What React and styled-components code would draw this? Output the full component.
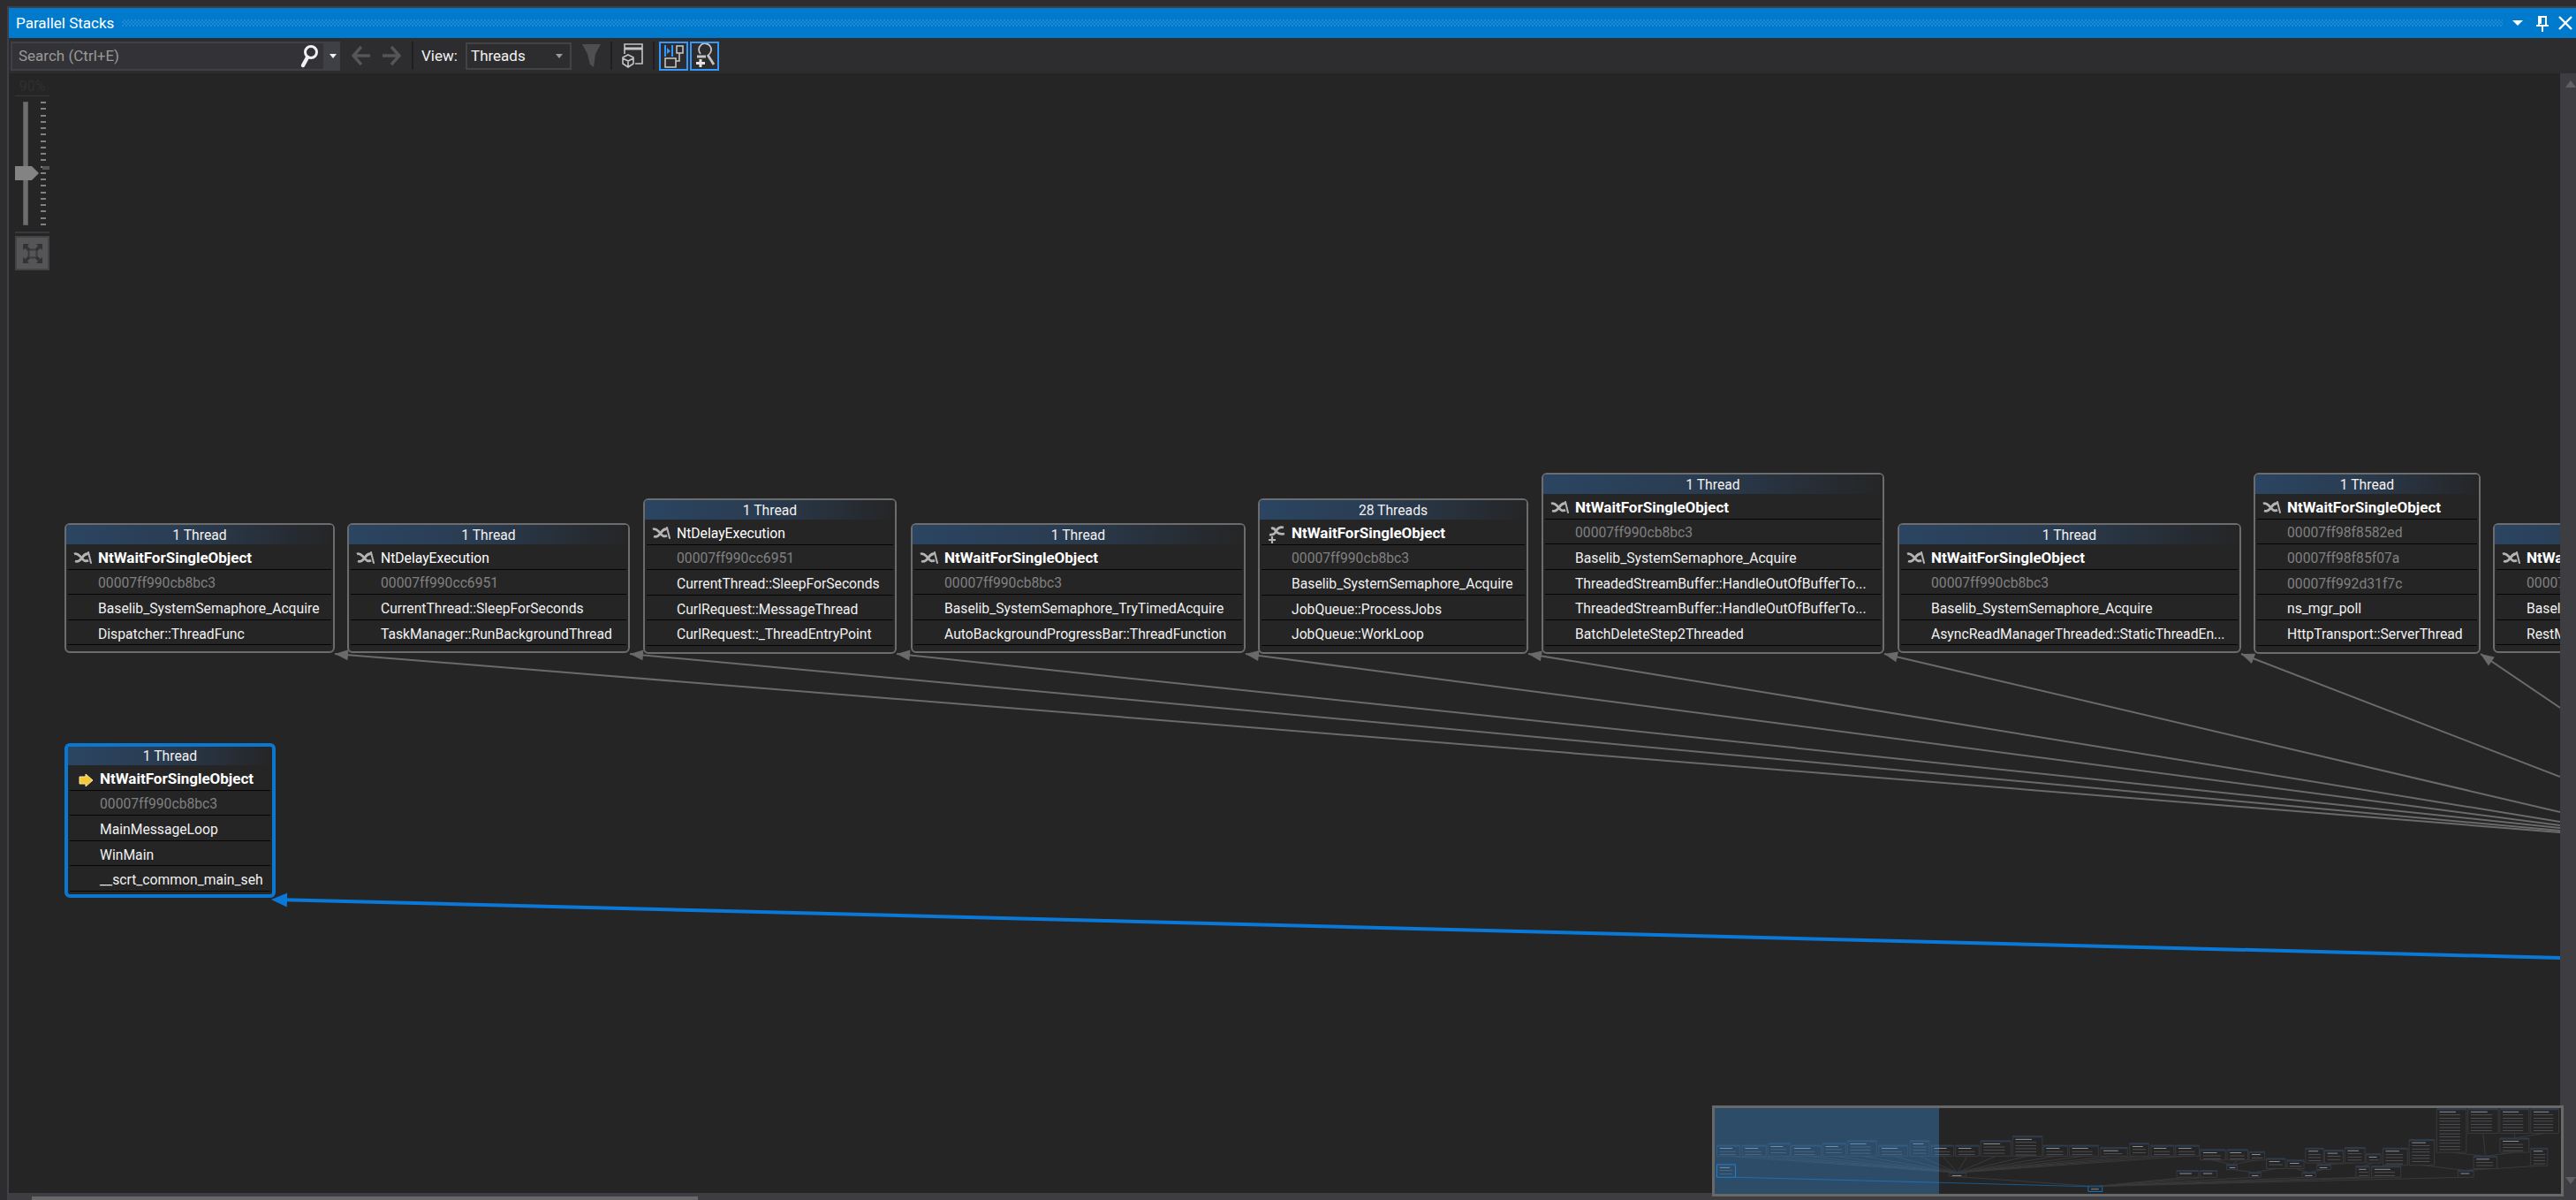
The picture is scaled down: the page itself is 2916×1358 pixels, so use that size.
import React from 'react';
import styled, { createGlobalStyle } from 'styled-components';

const GlobalStyle = createGlobalStyle`
html, body {
    margin: 0;
    padding: 0;
    background: #2d2d30;
}
* {
    box-sizing: border-box;
}
`
const FONT = `Roboto, "Noto Sans", sans-serif`;

const Window = styled.div`
position: relative;
width: 2916px;
height: 1358px;
display: flex;
overflow: hidden;
background: #2d2d30;
font-family: ${FONT};
padding-top: 7px;
`
const Gutter = styled.div`
width: 8px;
flex: none;
`
const Panel = styled.div`
flex: 1;
min-width: 0;
display: flex;
flex-direction: column;
border-left: 2px solid #3f3f46;
border-top: 2px solid #3f3f46;
`
const TitleBar = styled.div`
height: 34px;
flex: none;
display: flex;
align-items: center;
background: #007acc;
color: #fff;
font-size: 17px;
padding-left: 8px;
`
const TitleText = styled.div`
width: 120px;
flex: none;
`
const Grip = styled.div`
flex: 1;
height: 8px;
margin-right: 3px;
background: repeating-conic-gradient(#1f8ad3 0 25%, #007acc 0 50%) 0 0 / 4px 4px;
`
const TitleIcon = styled.svg`
width: ${p => p.$w || 28}px;
height: 24px;
flex: none;
`
const Toolbar = styled.div`
height: 40px;
flex: none;
display: flex;
align-items: center;
background: #2d2d30;
padding-left: 2px;
color: #f1f1f1;
font-size: 17px;
`
const SearchBox = styled.div`
width: 356px;
height: 33px;
display: flex;
align-items: center;
justify-content: space-between;
padding: 0 5px 0 7px;
background: #333337;
border: 2px solid #3f3f46;
color: #999;
`
const SearchDrop = styled.div`
width: 17px;
height: 33px;
display: flex;
align-items: center;
justify-content: center;
background: #3f3f46;
margin-right: 7px;
`
const Caret = styled.div`
width: 0;
height: 0;
border-left: 4px solid transparent;
border-right: 4px solid transparent;
border-top: 5px solid ${p => p.$color};
`
const ToolSlot = styled.div`
width: ${p => p.$w}px;
height: 33px;
flex: none;
display: flex;
align-items: center;
justify-content: center;
`
const Sep = styled.div`
width: 2px;
height: 32px;
flex: none;
background: #1f1f20;
margin-left: ${p => p.$ml || 0}px;
`
const ViewLabel = styled.div`
width: 50px;
margin-left: 9px;
`
const Combo = styled.div`
width: 120px;
height: 31px;
display: flex;
align-items: center;
justify-content: space-between;
padding: 0 8px 0 4px;
background: #2d2d30;
border: 2px solid #434346;
`
const Toggle = styled.div`
width: 33px;
height: 33px;
flex: none;
display: flex;
align-items: center;
justify-content: center;
border: 2px solid #3399ff;
margin-left: ${p => p.$ml}px;
`
const Body = styled.div`
flex: 1;
min-height: 0;
display: flex;
`
const Canvas = styled.div`
position: relative;
flex: 1;
overflow: hidden;
background: #252526;
`
const VScroll = styled.div`
width: 18px;
flex: none;
display: flex;
flex-direction: column;
justify-content: space-between;
align-items: flex-end;
padding: 8px 0 10px;
background: #3e3e42;
`
const ScrollArrow = styled.div`
width: 0;
height: 0;
border-left: 6px solid transparent;
border-right: 6px solid transparent;
${p => p.$up ? 'border-bottom' : 'border-top'}: 8px solid #606064;
`
const HScroll = styled.div`
height: 8px;
flex: none;
background: #3e3e42;
padding: 4px 0 0 26px;
`
const HThumb = styled.div`
width: 754px;
height: 4px;
background: #686868;
`
const Wires = styled.svg`
position: absolute;
left: 0;
top: 0;
`
const Node = styled.div`
position: absolute;
left: ${p => p.$x - 10}px;
top: ${p => p.$y - 83}px;
width: ${p => p.$w}px;
background: #252526;
border: ${p => p.$active ? '4px solid #0a78d0' : '2px solid #6c6c6c'};
border-radius: 6px;
padding-bottom: ${p => p.$active ? 3 : 7}px;
color: #f1f1f1;
font-size: 15.7px;
`
const NodeHead = styled.div`
height: ${p => p.$active ? 21 : 22}px;
display: flex;
align-items: center;
justify-content: center;
border-radius: 3px 3px 0 0;
background: linear-gradient(90deg, #2b4562 0%, #2a3c51 45%, #252526 100%);
`
const Frame = styled.div`
height: 28.6px;
display: flex;
align-items: center;
margin: 0 2px;
padding-top: 3px;
border-bottom: 1px solid #050505;
white-space: nowrap;
color: ${p => p.$addr ? '#808080' : p.$top ? '#ffffff' : '#f1f1f1'};
font-weight: ${p => p.$top && p.$bold ? 700 : 400};
font-size: ${p => p.$top && p.$bold ? 17 : 15.7}px;
`
const FrameIcon = styled.div`
width: 34px;
height: 100%;
flex: none;
padding: 5px 0 0 6px;
svg {
    display: block;
}
`
const ZoomRail = styled.div`
position: absolute;
left: 7px;
top: 0;
width: 39px;
display: flex;
flex-direction: column;
`
const ZoomPercent = styled.div`
height: 26px;
text-align: center;
color: #303032;
font-size: 16px;
line-height: 30px;
border-bottom: 1px solid #38383a;
`
const SliderBox = styled.div`
position: relative;
height: 155px;
border-bottom: 2px solid #38383a;
`
const Track = styled.div`
position: absolute;
left: 9px;
top: 6px;
width: 6px;
height: 140px;
background: #6e6e6e;
border: 1px solid #5a5a5a;
`
const Ticks = styled.div`
position: absolute;
left: 29px;
top: 6px;
height: 140px;
display: flex;
flex-direction: column;
justify-content: space-between;
`
const Tick = styled.div`
width: 6px;
height: 2px;
background: #808080;
`
const TickMark = styled.div`
position: absolute;
left: 31px;
top: 79px;
width: 8px;
height: 4px;
background: #555;
`
const Thumb = styled.div`
position: absolute;
left: 0;
top: 79px;
width: 27px;
height: 16px;
background: #838383;
clip-path: polygon(0 0, 70% 0, 100% 50%, 70% 100%, 0 100%);
`
const FitButton = styled.div`
width: 39px;
height: 39px;
margin-top: 3px;
display: flex;
align-items: center;
justify-content: center;
background: #555557;
border: 2px solid #434345;
`
const Minimap = styled.div`
position: absolute;
left: 1938px;
top: 1251px;
width: 964px;
height: 103px;
background: #252526;
border: 3px solid #686868;
`
const MiniView = styled.div`
position: absolute;
left: 0;
top: 0;
width: 254px;
height: 100%;
background: rgba(60, 150, 230, 0.35);
`
const MiniSvg = styled.svg`
position: absolute;
left: 0;
top: 0;
width: 100%;
height: 100%;
`

const THREAD_ICON = (
    <svg width="21" height="15" viewBox="0 0 21 15" fill="none" stroke="#b4b4b4" strokeWidth="2.8">
        <path d="M1 3 C5 1 7 5 9 7 C11 10 14 12 17 10" />
        <path d="M2 11 C5 12 8 10 10 7 C12 4 14 2 17 3" />
        <path d="M17 1 L20 13" strokeWidth="2" strokeLinecap="round" />
    </svg>
);

const MANY_ICON = (
    <svg width="21" height="20" viewBox="0 0 21 20" fill="none" stroke="#b4b4b4" strokeWidth="2.8" style={{ marginTop: -1 }}>
        <path d="M5 3 C8 2 10 5 11 7 C13 9 15 10 20 9" />
        <path d="M3 10 C7 11 10 8 11 5 C13 2 15 1 19 2" />
        <path d="M6 12 V20 M2 16 H10" strokeWidth="2.2" />
    </svg>
);

const CURRENT_ICON = (
    <svg width="20" height="16" viewBox="0 0 20 16" style={{ margin: '1px 0 0 4px' }}>
        <path d="M1 4 H8 V1 L16 8 L8 15 V12 H1 Z" fill="#f6c935" stroke="#f4e7b0" strokeWidth="1" />
    </svg>
);

const A = '00007ff990cb8bc3';
const NT = 'NtWaitForSingleObject';
const BASE = 'Baselib_SystemSemaphore_Acquire';

const NODES = [
    { x: 73, y: 592, w: 306, head: '1 Thread', frames: [NT, A, BASE, 'Dispatcher::ThreadFunc'] },
    { x: 393, y: 592, w: 320, head: '1 Thread', plain: true, frames: ['NtDelayExecution', '00007ff990cc6951', 'CurrentThread::SleepForSeconds', 'TaskManager::RunBackgroundThread'] },
    { x: 728, y: 564, w: 287, head: '1 Thread', plain: true, frames: ['NtDelayExecution', '00007ff990cc6951', 'CurrentThread::SleepForSeconds', 'CurlRequest::MessageThread', 'CurlRequest::_ThreadEntryPoint'] },
    { x: 1031, y: 592, w: 379, head: '1 Thread', frames: [NT, A, 'Baselib_SystemSemaphore_TryTimedAcquire', 'AutoBackgroundProgressBar::ThreadFunction'] },
    { x: 1424, y: 564, w: 306, head: '28 Threads', many: true, frames: [NT, A, BASE, 'JobQueue::ProcessJobs', 'JobQueue::WorkLoop'] },
    { x: 1745, y: 535, w: 388, head: '1 Thread', frames: [NT, A, BASE, 'ThreadedStreamBuffer::HandleOutOfBufferTo...', 'ThreadedStreamBuffer::HandleOutOfBufferTo...', 'BatchDeleteStep2Threaded'] },
    { x: 2148, y: 592, w: 389, head: '1 Thread', frames: [NT, A, BASE, 'AsyncReadManagerThreaded::StaticThreadEn...'] },
    { x: 2551, y: 535, w: 257, head: '1 Thread', frames: [NT, '00007ff98f8582ed', '00007ff98f85f07a', '00007ff992d31f7c', 'ns_mgr_poll', 'HttpTransport::ServerThread'] },
    { x: 2822, y: 592, w: 300, head: '1 Thread', frames: [NT, A, BASE, 'RestManager::ThreadFunc'] },
    { x: 73, y: 841, w: 239, head: '1 Thread', active: true, frames: [NT, A, 'MainMessageLoop', 'WinMain', '__scrt_common_main_seh'] },
];

// tip of the arrow on the node corner, then where the line leaves the canvas
const WIRES = [
    [379, 740, 2898, 942], [713, 740, 2898, 940], [1015, 740, 2898, 937], [1410, 740, 2898, 934],
    [1730, 740, 2898, 930], [2133, 740, 2898, 919], [2537, 740, 2898, 879], [2808, 740, 2898, 801],
];

// minimap nodes, x1 x2 y1 y2 in crop units, then the point its wire runs to
const MINI = [
    [37, 78, 200, 238, 466, 296], [82, 125, 200, 238, 466, 296], [128, 168, 193, 238, 466, 296], [170, 223, 200, 238, 466, 296],
    [226, 267, 193, 238, 466, 296], [270, 322, 184, 238, 466, 296], [326, 378, 200, 238, 466, 296], [382, 416, 184, 238, 466, 296],
    [420, 460, 200, 238, 466, 296], [463, 505, 200, 238, 466, 296], [508, 562, 184, 238, 466, 296], [565, 618, 168, 238, 466, 296],
    [620, 663, 200, 238, 466, 296], [666, 718, 200, 238, 466, 296], [722, 770, 208, 238, 466, 296], [774, 808, 193, 238, 466, 296],
    [812, 853, 200, 238, 466, 296], [856, 898, 200, 238, 466, 296], [900, 945, 215, 252, 957, 268], [948, 985, 215, 252, 957, 268],
    [987, 1015, 222, 252, 957, 268], [1018, 1052, 246, 282, 997, 295], [1055, 1085, 252, 282, 1094, 295], [1088, 1120, 210, 262, 1120, 268],
    [1122, 1155, 217, 262, 1120, 268], [1158, 1194, 208, 262, 1120, 268], [1196, 1222, 230, 262, 1190, 273], [1226, 1270, 210, 270, 1232, 273],
    [1273, 1318, 180, 270, 1374, 288], [1322, 1375, 72, 225, 1409, 238], [1378, 1432, 72, 158, 1409, 238], [1435, 1487, 72, 158, 1461, 175],
    [1490, 1540, 72, 158, 1461, 175], [1435, 1487, 175, 225, 1409, 238], [1388, 1430, 238, 282, 1374, 288], [1490, 1520, 210, 272, 1374, 288],
    [1360, 1388, 288, 312, 712, 344], [1178, 1202, 273, 312, 712, 344], [1206, 1258, 273, 312, 712, 344], [1108, 1133, 268, 285, 1094, 295],
    [947, 966, 268, 285, 997, 295], [987, 1008, 295, 312, 712, 344], [1082, 1106, 295, 312, 712, 344], [858, 897, 288, 312, 712, 344],
    [900, 930, 288, 312, 712, 344], [452, 482, 295, 310, 712, 344], [700, 725, 343, 362], [37, 70, 267, 312],
];

const arrowHead = (tx, ty, ex, ey, len, half) => {
    const d = Math.hypot(ex - tx, ey - ty);
    const ux = (ex - tx) / d;
    const uy = (ey - ty) / d;
    const bx = tx + ux * len;
    const by = ty + uy * len;
    return `${tx},${ty} ${bx - uy * half},${by + ux * half} ${bx + uy * half},${by - ux * half}`;
};

const MiniNode = ({ box, index }) => {
    const [x1, x2, y1, y2] = box;
    const active = index >= MINI.length - 2;
    const rows = [];
    for (let y = y1 + 10; y < y2 - 4; y += 11) {
        const first = y === y1 + 10;
        rows.push(<rect key={y} x={x1 + 5} y={y} width={(x2 - x1) * (first ? 0.55 : 0.7)} height="2" fill={first ? '#c8c8c8' : '#626468'} />);
    }
    return (
        <g>
            <rect x={x1} y={y1} width={x2 - x1} height={y2 - y1} fill="#252526" stroke={active ? '#0a78d0' : '#3a3a3c'} strokeWidth="1" vectorEffect="non-scaling-stroke" />
            <rect x={x1} y={y1} width={x2 - x1} height="5" fill="#2b3d52" />
            {rows}
        </g>
    );
};

const ThreadNode = ({ node }) => (
    <Node $x={node.x} $y={node.y} $w={node.w} $active={node.active}>
        <NodeHead $active={node.active}>{node.head}</NodeHead>
        {node.frames.map((frame, index) => (
            <Frame
                key={index}
                $top={index === 0}
                $bold={!node.plain}
                $addr={/^[0-9a-f]{16}$/.test(frame)}
            >
                <FrameIcon>
                    {index === 0 && (node.active ? CURRENT_ICON : node.many ? MANY_ICON : THREAD_ICON)}
                </FrameIcon>
                {frame}
            </Frame>
        ))}
    </Node>
);

const App = () => {
    const ticks = Array.from({ length: 20 });

    return (
        <Window>
            <GlobalStyle />
            <Gutter />
            <Panel>
                <TitleBar>
                    <TitleText>Parallel Stacks</TitleText>
                    <Grip />
                    <TitleIcon viewBox="0 0 28 24"><path d="M8 9 H20 L14 15 Z" fill="#fff" /></TitleIcon>
                    <TitleIcon viewBox="0 0 28 24">
                        <path d="M10 5 H18 V15 H10 Z M12 5 V13 M7 15 H21 M14 15 V22" fill="none" stroke="#fff" strokeWidth="2" />
                    </TitleIcon>
                    <TitleIcon $w={24} viewBox="0 0 24 24">
                        <path d="M5 5 L19 19 M19 5 L5 19" fill="none" stroke="#fff" strokeWidth="2.4" />
                    </TitleIcon>
                </TitleBar>
                <Toolbar>
                    <SearchBox>
                        Search (Ctrl+E)
                        <svg width="22" height="28" viewBox="0 0 22 28" fill="none" stroke="#f1f1f1">
                            <circle cx="13" cy="10" r="6.5" strokeWidth="3" />
                            <path d="M9 16 L4 25" strokeWidth="4.4" strokeLinecap="round" />
                        </svg>
                    </SearchBox>
                    <SearchDrop><Caret $color="#f1f1f1" /></SearchDrop>
                    <ToolSlot $w={34}>
                        <svg width="24" height="26" viewBox="0 0 24 26" fill="none" stroke="#555558" strokeWidth="3.4">
                            <path d="M12 3 L3 13 L12 23 M3 13 H22" />
                        </svg>
                    </ToolSlot>
                    <ToolSlot $w={34}>
                        <svg width="24" height="26" viewBox="0 0 24 26" fill="none" stroke="#555558" strokeWidth="3.4">
                            <path d="M12 3 L21 13 L12 23 M21 13 H2" />
                        </svg>
                    </ToolSlot>
                    <Sep $ml={6} />
                    <ViewLabel>View:</ViewLabel>
                    <Combo>
                        Threads
                        <Caret $color="#999" />
                    </Combo>
                    <ToolSlot $w={44}>
                        <svg width="24" height="28" viewBox="0 0 24 28">
                            <path d="M2 1 H23 L17 12 L15 27 L11 24 L8 12 Z" fill="#4f4f52" />
                        </svg>
                    </ToolSlot>
                    <Sep />
                    <ToolSlot $w={46}>
                        <svg width="24" height="30" viewBox="0 0 24 30" fill="none" stroke="#c4c4c4" strokeWidth="1.6">
                            <path d="M3 13 V2 H23 V24 H15" />
                            <path d="M3 7 H23" strokeWidth="3" />
                            <path d="M7 14 L13 17 V24 L7 28 L1 24 V17 Z M1 18 L7 21 L13 18 M7 21 V28" />
                        </svg>
                    </ToolSlot>
                    <Sep />
                    <Toggle $ml={5}>
                        <svg width="24" height="28" viewBox="0 0 24 28" fill="none" stroke="#c4c4c4" strokeWidth="1.6">
                            <path d="M2 2 V15 M10 2 V15" stroke="#3399ff" strokeWidth="2" />
                            <path d="M4 5 L8 9 L4 12 Z" fill="#3399ff" stroke="none" />
                            <rect x="15" y="3" width="7" height="8" />
                            <rect x="2" y="17" width="12" height="10" />
                            <path d="M18 11 V20 H14" />
                        </svg>
                    </Toggle>
                    <Toggle $ml={2}>
                        <svg width="26" height="28" viewBox="0 0 26 28" fill="none" stroke="#c4c4c4" strokeWidth="1.8">
                            <path d="M8 12 A7 7 0 1 1 17 13" />
                            <path d="M16 13 L23 24" strokeWidth="2.8" />
                            <path d="M4 15 H14" strokeWidth="3" />
                            <path d="M8 18 V27 M3 22.5 H13" stroke="#e4e4e4" strokeWidth="3" />
                        </svg>
                    </Toggle>
                </Toolbar>
                <Body>
                    <Canvas>
                        <Wires width="2888" height="1267" viewBox="10 83 2888 1267">
                            {WIRES.map(([tx, ty, ex, ey], index) => (
                                <g key={index}>
                                    <line x1={tx} y1={ty} x2={ex} y2={ey} stroke="#6a6a6a" strokeWidth="2" />
                                    <polygon points={arrowHead(tx, ty, ex, ey, 15, 6)} fill="#6a6a6a" />
                                </g>
                            ))}
                            <line x1={312} y1={1018} x2={2898} y2={1084} stroke="#0a78d6" strokeWidth="4" />
                            <polygon points={arrowHead(307, 1018, 2898, 1084, 18, 8)} fill="#0a78d6" />
                        </Wires>
                        {NODES.map((node, index) => <ThreadNode key={index} node={node} />)}
                        <ZoomRail>
                            <ZoomPercent>90%</ZoomPercent>
                            <SliderBox>
                                <Track />
                                <Ticks>{ticks.map((_, index) => <Tick key={index} />)}</Ticks>
                                <TickMark />
                                <Thumb />
                            </SliderBox>
                            <FitButton>
                                <svg width="24" height="24" viewBox="0 0 24 24" fill="#333335">
                                    <rect x="7.5" y="7.5" width="9" height="9" fill="none" stroke="#3a3a3c" strokeWidth="2" />
                                    <path d="M1 1 H8 L6 3.5 L9 6.5 L6.5 9 L3.5 6 L1 8 Z" />
                                    <path d="M23 1 H16 L18 3.5 L15 6.5 L17.5 9 L20.5 6 L23 8 Z" />
                                    <path d="M1 23 H8 L6 20.5 L9 17.5 L6.5 15 L3.5 18 L1 16 Z" />
                                    <path d="M23 23 H16 L18 20.5 L15 17.5 L17.5 15 L20.5 18 L23 16 Z" />
                                </svg>
                            </FitButton>
                        </ZoomRail>
                    </Canvas>
                    <VScroll>
                        <ScrollArrow $up />
                        <ScrollArrow />
                    </VScroll>
                </Body>
                <HScroll><HThumb /></HScroll>
            </Panel>
            <Minimap>
                <MiniSvg viewBox="33 70 1511 300" preserveAspectRatio="none">
                    {MINI.filter(box => box.length > 4).map(([x1, x2, , y2, px, py], index) => (
                        <line key={index} x1={(x1 + x2) / 2} y1={y2} x2={px} y2={py} stroke="#3a3a3c" strokeWidth="1" vectorEffect="non-scaling-stroke" />
                    ))}
                    <path d="M70 312 L712 345" stroke="#155a8f" strokeWidth="1" vectorEffect="non-scaling-stroke" fill="none" />
                    {MINI.map((box, index) => <MiniNode key={index} box={box} index={index} />)}
                </MiniSvg>
                <MiniView />
            </Minimap>
        </Window>
    );
};

export default App;
